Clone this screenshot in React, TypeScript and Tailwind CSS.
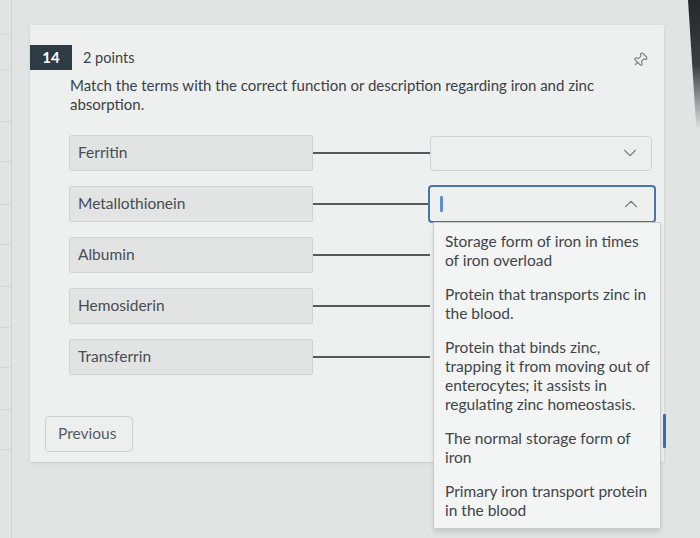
import React from 'react';
import { ChevronDown, ChevronUp, Pin } from 'lucide-react';

const terms = ['Ferritin', 'Metallothionein', 'Albumin', 'Hemosiderin', 'Transferrin'];

const options = [
  'Storage form of iron in times of iron overload',
  'Protein that transports zinc in the blood.',
  'Protein that binds zinc, trapping it from moving out of enterocytes; it assists in regulating zinc homeostasis.',
  'The normal storage form of iron',
  'Primary iron transport protein in the blood',
];

const font = { fontFamily: 'Lato, "Open Sans", "Liberation Sans", sans-serif' };

function Sidebar() {
  return (
    <div className="w-[12px] shrink-0 h-full border-r border-[#cfd2d1] flex flex-col">
      {[35, 35, 52, 40, 43, 40, 42, 41, 40, 42, 40].map((h, i) => (
        <div key={i} className="border-b border-[#d3d6d5]" style={{ height: h }} />
      ))}
    </div>
  );
}

function Dropdown() {
  return (
    <div className="absolute left-[5px] top-[37px] w-[228px] bg-[#f3f4f4] border border-[#c9cccc] shadow-md z-10 pl-[11px] pr-[10px] pt-[9px] pb-[8px] flex flex-col gap-[15px]">
      {options.map((o) => (
        <div key={o} className="text-[15.5px] leading-[19px] text-[#3f454a]">
          {o}
        </div>
      ))}
    </div>
  );
}

function MatchRow({ term, index }: { term: string; index: number }) {
  const open = index === 1;
  return (
    <div className="flex items-center h-[36px]">
      <div className="w-[244px] h-[36px] bg-[#e2e4e4] border border-[#cfd2d2] rounded-[2px] flex items-center pl-[8px] text-[15.5px] text-[#474d52]">
        {term}
      </div>
      <div className="w-[117px] h-[2px] bg-[#55595c]" />
      {index === 0 && (
        <div className="w-[222px] h-[35px] border border-[#cfd2d2] rounded-[4px] bg-[#edefef] flex items-center justify-end pr-[10px]">
          <ChevronDown size={22} strokeWidth={1.2} color="#7a7f82" />
        </div>
      )}
      {open && (
        <div className="relative -ml-[2px]">
          <div className="w-[228px] h-[38px] border-2 border-[#4a74a6] rounded-[4px] bg-[#eef0f0] flex items-center justify-between pl-[10px] pr-[12px]">
            <div className="w-[3px] h-[16px] bg-[#5b8fd0] rounded-[1px]" />
            <ChevronUp size={22} strokeWidth={1.2} color="#7a7f82" />
          </div>
          <Dropdown />
        </div>
      )}
    </div>
  );
}

export default function App() {
  return (
    <div className="relative w-[700px] h-[538px] overflow-hidden bg-[#e2e4e3] flex" style={font}>
      <Sidebar />
      <div className="pl-[18px] pt-[25px]">
        <div className="relative w-[634px] h-[437px] bg-[#eef0ef] shadow-sm">
          <div className="flex items-center pt-[20px]">
            <div className="w-[42px] h-[25px] bg-[#2d3b45] text-white font-bold text-[15px] flex items-center justify-center">
              14
            </div>
            <span className="ml-[11px] text-[14.5px] text-[#3b4146]">2 points</span>
            <div className="ml-auto mr-[16px] rotate-45 mt-[4px]">
              <Pin size={16} strokeWidth={1.5} color="#6b7074" />
            </div>
          </div>
          <p className="ml-[40px] mt-[6px] w-[540px] text-[15px] leading-[19px] text-[#3b4146]">
            Match the terms with the correct function or description regarding iron and zinc absorption.
          </p>
          <div className="ml-[39px] mt-[21px] flex flex-col gap-[15px]">
            {terms.map((t, i) => (
              <MatchRow key={t} term={t} index={i} />
            ))}
          </div>
          <div className="ml-[15px] mt-[41px] w-[88px] h-[36px] border border-[#cdd0d0] rounded-[4px] bg-[#edefee] flex items-center pl-[12px] text-[15.5px] text-[#555b60]">
            Previous
          </div>
          <div className="absolute right-[-2px] top-[389px] w-[3px] h-[34px] bg-[#2f6fb5] rounded-[1px] z-20" />
        </div>
      </div>
      <div className="absolute top-0 right-0 w-[12px] h-[130px] bg-gradient-to-b from-[#25292c] via-[#3a3e41] to-transparent [clip-path:polygon(0_0,100%_0,100%_100%,70%_100%)]" />
    </div>
  );
}
